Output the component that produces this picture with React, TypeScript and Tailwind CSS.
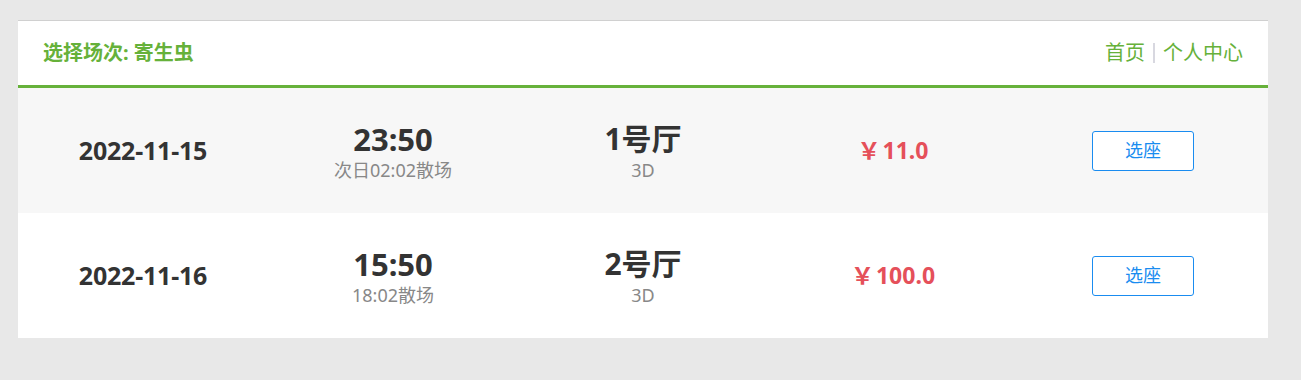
import React from "react";

const sessions = [
  { date: "2022-11-15", time: "23:50", end: "次日02:02散场", hall: "1号厅", type: "3D", price: "11.0" },
  { date: "2022-11-16", time: "15:50", end: "18:02散场", hall: "2号厅", type: "3D", price: "100.0" },
];

export default function App() {
  return (
    <div
      className="min-h-[380px] bg-[#e8e8e8] pt-5 pl-[18px]"
      style={{ fontFamily: '"Noto Sans", "Noto Sans CJK SC", sans-serif' }}
    >
      <div className="w-[1250px] bg-white border-t border-[#d0d0d0]">
        {/* header */}
        <div className="h-[67px] flex items-center justify-between pl-[25px] pr-[25px] border-b-[3px] border-[#66b13a]">
          <h2 className="text-[20px] font-bold text-[#66b13a]">选择场次: 寄生虫</h2>
          <div className="text-[20px] text-[#66b13a] flex items-center">
            <a href="#">首页</a>
            <span className="mx-[8px] w-[2px] h-[20px] bg-[#d8d8e0]" />
            <a href="#">个人中心</a>
          </div>
        </div>

        {/* rows */}
        {sessions.map((s, i) => (
          <div
            key={i}
            className={`grid grid-cols-5 h-[125px] items-center text-center ${i % 2 === 0 ? "bg-[#f7f7f7]" : "bg-white"}`}
          >
            <div className="text-[25px] font-bold text-[#333] tracking-[-0.2px]">{s.date}</div>
            <div className="flex flex-col items-center">
              <span className="text-[31px] font-bold text-[#333] leading-[38px]">{s.time}</span>
              <span className="text-[18px] text-[#888] leading-[24px]">{s.end}</span>
            </div>
            <div className="flex flex-col items-center">
              <span className="text-[30px] font-bold text-[#333] leading-[38px]">{s.hall}</span>
              <span className="text-[18px] text-[#888] leading-[24px]">{s.type}</span>
            </div>
            <div className="text-[23px] font-bold text-[#e5505a] flex justify-center items-baseline">
              <span className="mr-[2px]">￥</span>
              <span>{s.price}</span>
            </div>
            <div className="flex justify-center">
              <button className="w-[102px] h-[40px] border border-[#1a8cf0] rounded-[3px] bg-white text-[18px] text-[#1a8cf0]">
                选座
              </button>
            </div>
          </div>
        ))}
      </div>
    </div>
  );
}
